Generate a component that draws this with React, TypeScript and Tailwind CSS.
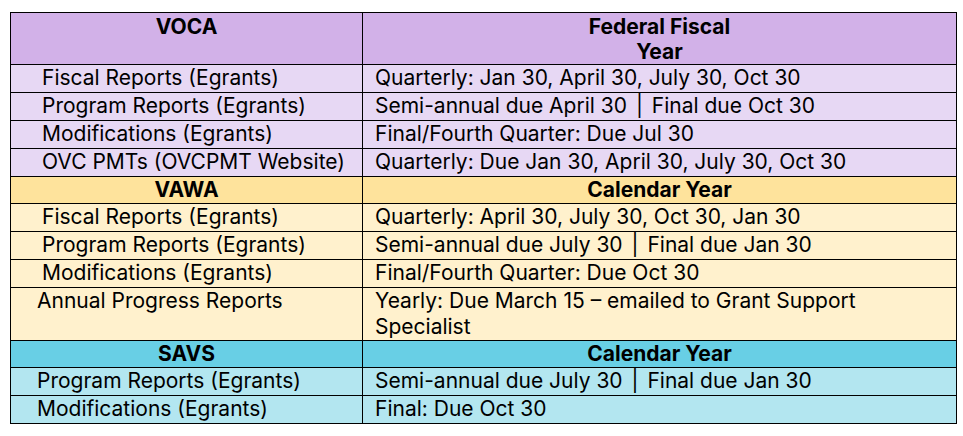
import React from 'react';

type Row = { left: string; right: string; indent?: 'deep' | 'shallow'; tall?: boolean };

interface Section {
  name: string;
  period: string;
  headBg: string;
  rowBg: string;
  rows: Row[];
}

const sections: Section[] = [
  {
    name: 'VOCA',
    period: 'Federal Fiscal Year',
    headBg: 'bg-[#d2b1e8]',
    rowBg: 'bg-[#e7d8f4]',
    rows: [
      { left: 'Fiscal Reports (Egrants)', right: 'Quarterly: Jan 30, April 30, July 30, Oct 30', indent: 'deep' },
      { left: 'Program Reports (Egrants)', right: 'Semi-annual due April 30 | Final due Oct 30', indent: 'deep' },
      { left: 'Modifications (Egrants)', right: 'Final/Fourth Quarter: Due Jul 30', indent: 'deep' },
      { left: 'OVC PMTs (OVCPMT Website)', right: 'Quarterly: Due Jan 30, April 30, July 30, Oct 30', indent: 'deep' },
    ],
  },
  {
    name: 'VAWA',
    period: 'Calendar Year',
    headBg: 'bg-[#fee39c]',
    rowBg: 'bg-[#fff1cd]',
    rows: [
      { left: 'Fiscal Reports (Egrants)', right: 'Quarterly: April 30, July 30, Oct 30, Jan 30', indent: 'deep' },
      { left: 'Program Reports (Egrants)', right: 'Semi-annual due July 30 | Final due Jan 30', indent: 'deep' },
      { left: 'Modifications (Egrants)', right: 'Final/Fourth Quarter: Due Oct 30', indent: 'deep' },
      { left: 'Annual Progress Reports', right: 'Yearly: Due March 15 \u2013 emailed to Grant Support Specialist', indent: 'shallow', tall: true },
    ],
  },
  {
    name: 'SAVS',
    period: 'Calendar Year',
    headBg: 'bg-[#68cfe5]',
    rowBg: 'bg-[#b3e6f0]',
    rows: [
      { left: 'Program Reports (Egrants)', right: 'Semi-annual due July 30 | Final due Jan 30', indent: 'shallow' },
      { left: 'Modifications (Egrants)', right: 'Final: Due Oct 30', indent: 'shallow' },
    ],
  },
];

// the source puts a wider gap around the pipe than a plain space gives
function RightText({ text }: { text: string }) {
  const parts = text.split(' | ');
  if (parts.length < 2) return <>{text}</>;
  return (
    <>
      {parts[0]} <span className="mx-[3px]">|</span> {parts[1]}
    </>
  );
}

export default function App() {
  return (
    <div className="w-[963px] h-[436px] bg-white pt-[12px] pl-[10px] font-['Inter','Liberation_Sans',sans-serif] text-[21px] text-black">
      <table className="border-collapse w-[946px] table-fixed">
        <colgroup>
          <col className="w-[352px]" />
          <col className="w-[594px]" />
        </colgroup>
        <tbody>
          {sections.map((s, si) => (
            <React.Fragment key={s.name}>
              <tr className={s.headBg}>
                <td
                  className={`border border-black text-center font-bold align-top leading-[25px] ${si === 0 ? 'h-[52px] pt-[1px]' : 'h-[27px]'}`}
                >
                  {s.name}
                </td>
                <td className={`border border-black text-center font-bold align-top leading-[25px] ${si === 0 ? 'pt-[1px]' : ''}`}>
                  {si === 0 ? (
                    <>
                      Federal Fiscal
                      <br />
                      Year
                    </>
                  ) : (
                    s.period
                  )}
                </td>
              </tr>
              {s.rows.map((r, ri) => (
                <tr key={ri} className={s.rowBg}>
                  <td
                    className={`border border-black align-top leading-[26px] ${r.tall ? 'h-[53px]' : 'h-[28px]'} ${
                      r.indent === 'deep' ? 'pl-[31px]' : 'pl-[26px]'
                    }`}
                  >
                    {r.left}
                  </td>
                  <td className="border border-black align-top leading-[26px] pl-[12px] pr-[70px]">
                    <RightText text={r.right} />
                  </td>
                </tr>
              ))}
            </React.Fragment>
          ))}
        </tbody>
      </table>
    </div>
  );
}
